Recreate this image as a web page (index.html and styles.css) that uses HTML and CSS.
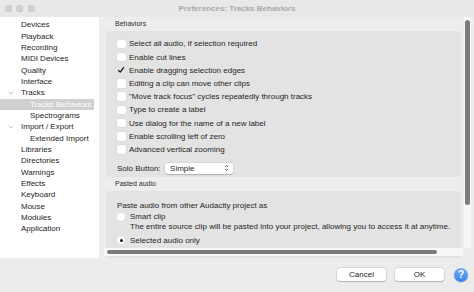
FILE: index.html
```html
<!DOCTYPE html>
<html lang="en">
<head>
<meta charset="utf-8">
<title>Preferences: Tracks Behaviors</title>
<link rel="stylesheet" href="styles.css">
</head>
<body>
<div class="window">
  <div class="titlebar">
    <div class="lights"><span></span><span></span><span></span></div>
    <div class="title">Preferences: Tracks Behaviors</div>
    <div></div>
  </div>
  <div class="body">
    <ul class="sidebar">
      <li>Devices</li>
      <li>Playback</li>
      <li>Recording</li>
      <li>MIDI Devices</li>
      <li>Quality</li>
      <li>Interface</li>
      <li class="parent"><svg class="chev" viewBox="0 0 6 4" width="6" height="4"><path d="M0.6 0.8 L3 3.2 L5.4 0.8"/></svg>Tracks</li>
      <li class="child selected">Tracks Behaviors</li>
      <li class="child">Spectrograms</li>
      <li class="parent"><svg class="chev" viewBox="0 0 6 4" width="6" height="4"><path d="M0.6 0.8 L3 3.2 L5.4 0.8"/></svg>Import / Export</li>
      <li class="child">Extended Import</li>
      <li>Libraries</li>
      <li>Directories</li>
      <li>Warnings</li>
      <li>Effects</li>
      <li>Keyboard</li>
      <li>Mouse</li>
      <li>Modules</li>
      <li>Application</li>
    </ul>
    <div class="main">
      <div class="scroll">
        <div class="section-label">Behaviors</div>
        <div class="group behaviors">
          <div class="check"><span class="box"></span>Select all audio, if selection required</div>
          <div class="check"><span class="box"></span>Enable cut lines</div>
          <div class="check"><span class="box checked"><svg viewBox="0 0 8 8" width="8" height="8"><path d="M1.4 4.3 L3.2 6.2 L6.6 1.6"/></svg></span>Enable dragging selection edges</div>
          <div class="check"><span class="box"></span>Editing a clip can move other clips</div>
          <div class="check"><span class="box"></span>"Move track focus" cycles repeatedly through tracks</div>
          <div class="check"><span class="box"></span>Type to create a label</div>
          <div class="check"><span class="box"></span>Use dialog for the name of a new label</div>
          <div class="check"><span class="box"></span>Enable scrolling left of zero</div>
          <div class="check"><span class="box"></span>Advanced vertical zooming</div>
          <div class="solo">
            <span class="solo-label">Solo Button:</span>
            <span class="popup">Simple<svg viewBox="0 0 6 9" width="5" height="8"><path d="M1.2 3.4 L3 1.4 L4.8 3.4 M1.2 5.6 L3 7.6 L4.8 5.6"/></svg></span>
          </div>
        </div>
        <div class="section-label">Pasted audio</div>
        <div class="group pasted">
          <div class="line">Paste audio from other Audacity project as</div>
          <div class="radio smart"><span class="dot"></span>Smart clip</div>
          <div class="desc">The entire source clip will be pasted into your project, allowing you to access it at anytime.</div>
          <div class="radio chosen"><span class="dot on"></span>Selected audio only</div>
        </div>
        <div class="vscroll"><div class="thumb"></div></div>
        <div class="hscroll"><div class="thumb"></div></div>
      </div>
    </div>
  </div>
  <div class="footer">
    <button class="btn">Cancel</button>
    <button class="btn">OK</button>
    <span class="help">?</span>
  </div>
</div>
</body>
</html>
```

FILE: styles.css
```css
html, body {
  margin: 0;
  padding: 0;
}
body {
  width: 474px;
  height: 292px;
  overflow: hidden;
  background: #ececec;
  font-family: "Liberation Sans", Arial, sans-serif;
  font-size: 8px;
  color: #262626;
}
.window {
  display: flex;
  flex-direction: column;
  height: 292px;
}
.titlebar {
  height: 17px;
  display: grid;
  grid-template-columns: 1fr auto 1fr;
  align-items: center;
  background: #e8e8e8;
}
.lights {
  display: flex;
  gap: 4.5px;
  padding-left: 4.5px;
}
.lights span {
  width: 7px;
  height: 7px;
  border-radius: 50%;
  background: #d2d2d2;
  box-shadow: inset 0 0 0 0.5px #c3c3c3;
}
.title {
  font-weight: bold;
  color: #a9a9a9;
  font-size: 8px;
}
.body {
  display: flex;
  height: 241px;
}
.sidebar {
  width: 99px;
  margin: 0;
  padding: 2.3px 0 0;
  list-style: none;
  background: #ffffff;
}
.sidebar li {
  box-sizing: border-box;
  height: 11.35px;
  line-height: 11.35px;
  padding-left: 21px;
  white-space: nowrap;
  display: flex;
  align-items: center;
}
.sidebar li.child {
  padding-left: 30px;
}
.sidebar li.parent {
  padding-left: 8px;
}
.chev {
  margin-right: 7px;
  fill: none;
  stroke: #b4b4b4;
  stroke-width: 0.9;
}
.sidebar li.selected {
  background: #d0d0d0;
  color: #ffffff;
  width: 94px;
}
.main {
  flex: 1;
  display: flex;
  padding-right: 3px;
  background: #ededed;
}
.scroll {
  flex: 1;
  position: relative;
  overflow: hidden;
  padding-left: 7px;
  padding-right: 10px;
}
.section-label {
  height: 14px;
  line-height: 14px;
  font-size: 7px;
  padding-left: 9px;
  color: #2a2a2a;
}
.group {
  background: #e3e3e3;
  border-radius: 4px;
  padding-left: 11px;
}
.behaviors {
  padding-top: 6.4px;
  padding-bottom: 3px;
}
.check {
  height: 13.2px;
  display: flex;
  align-items: center;
  white-space: nowrap;
}
.box {
  width: 8.5px;
  height: 8.5px;
  border-radius: 2px;
  background: #ffffff;
  box-shadow: 0 0 0 0.5px #d6d6d6;
  margin-right: 3.5px;
  flex: none;
  display: flex;
}
.box.checked {
  background: transparent;
  box-shadow: none;
}
.box.checked svg {
  fill: none;
  stroke: #111;
  stroke-width: 1.2;
  stroke-linecap: round;
  stroke-linejoin: round;
}
.solo {
  margin-top: 6.5px;
  height: 11.5px;
  display: flex;
  align-items: center;
}
.solo-label {
  margin-right: 4.5px;
}
.popup {
  width: 68px;
  height: 11.5px;
  box-sizing: border-box;
  background: #ffffff;
  border-radius: 3px;
  box-shadow: 0 0.5px 1px rgba(0, 0, 0, 0.2), 0 0 0 0.5px rgba(0, 0, 0, 0.06);
  display: flex;
  align-items: center;
  justify-content: space-between;
  padding: 0 4px 0 5px;
}
.popup svg {
  fill: none;
  stroke: #333;
  stroke-width: 0.9;
}
.pasted {
  padding-top: 8.5px;
  padding-bottom: 20px;
}
.line {
  height: 11px;
  line-height: 11px;
}
.radio {
  display: flex;
  align-items: center;
  white-space: nowrap;
}
.radio.smart {
  height: 10px;
  margin-top: 1.3px;
}
.radio.chosen {
  height: 11px;
  margin-top: 2.9px;
}
.desc {
  height: 10px;
  line-height: 10px;
  padding-left: 13px;
  white-space: nowrap;
  letter-spacing: 0.02px;
}
.dot {
  width: 8px;
  height: 8px;
  border-radius: 50%;
  background: #ffffff;
  box-shadow: 0 0 0 0.5px #d6d6d6;
  margin-right: 5px;
  flex: none;
  display: flex;
  align-items: center;
  justify-content: center;
}
.dot.on::after {
  content: "";
  width: 3px;
  height: 3px;
  border-radius: 50%;
  background: #111;
}
.vscroll {
  position: absolute;
  right: 0;
  top: 0;
  width: 8px;
  height: 231px;
  background: #f7f7f7;
  box-shadow: inset 0.5px 0 0 #e2e2e2;
}
.vscroll .thumb {
  position: absolute;
  left: 2px;
  top: 3px;
  width: 4.5px;
  height: 185px;
  border-radius: 2.5px;
  background: #7b7b7b;
}
.hscroll {
  position: absolute;
  left: 5px;
  right: 8px;
  top: 231px;
  height: 8px;
  background: #f7f7f7;
}
.hscroll .thumb {
  position: absolute;
  left: 3px;
  top: 2px;
  width: 330px;
  height: 4px;
  border-radius: 2px;
  background: #7b7b7b;
}
.footer {
  height: 34px;
  display: flex;
  align-items: center;
  justify-content: flex-end;
  padding-right: 6px;
  gap: 9px;
}
.btn {
  width: 49px;
  height: 13px;
  padding: 0;
  border: none;
  border-radius: 3px;
  background: #ffffff;
  box-shadow: 0 0 0 0.5px rgba(0, 0, 0, 0.12), 0 0.5px 1px rgba(0, 0, 0, 0.2);
  font-family: "Liberation Sans", Arial, sans-serif;
  font-size: 8px;
  color: #242424;
  margin-top: -1px;
}
.help {
  width: 14px;
  height: 14px;
  border-radius: 50%;
  background: linear-gradient(#72aef7, #3a82ea);
  color: #ffffff;
  font-weight: bold;
  font-size: 10px;
  display: flex;
  align-items: center;
  justify-content: center;
  margin-left: 1px;
  margin-top: -1px;
  box-shadow: 0 0.5px 1px rgba(0, 0, 0, 0.2);
}
```
